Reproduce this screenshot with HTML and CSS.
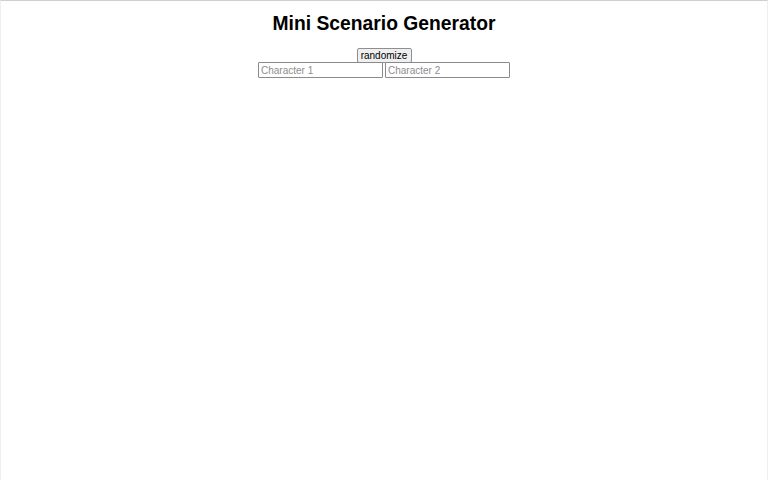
FILE: index.html
```html
<!DOCTYPE html>
<html lang="en">
<head>
<meta charset="utf-8">
<title>Mini Scenario Generator</title>
<link rel="stylesheet" href="styles.css">
</head>
<body>
  <main class="app">
    <h1 class="app-title">Mini Scenario Generator</h1>
    <button class="btn-randomize" type="button">randomize</button>
    <div class="characters">
      <input class="char-input" type="text" placeholder="Character 1">
      <input class="char-input" type="text" placeholder="Character 2">
    </div>
  </main>
</body>
</html>
```
FILE: styles.css
```css
html, body {
  height: 100%;
}

body {
  margin: 0;
  box-sizing: border-box;
  background: #fff;
  border-top: 1px solid #cfcfcf;
  border-left: 1px solid #efefef;
  border-right: 1px solid #efefef;
  font-family: "Liberation Sans", Arial, sans-serif;
  color: #000;
}

.app {
  display: flex;
  flex-direction: column;
  align-items: center;
}

.app-title {
  margin: 11px 0 0;
  font-size: 19.3px;
  line-height: 23px;
  font-weight: bold;
}

.btn-randomize {
  margin-top: 13px;
  width: 55px;
  height: 15px;
  padding: 0;
  font-family: "Liberation Sans", Arial, sans-serif;
  font-size: 10px;
  line-height: 13px;
  color: #000;
  background: #efefef;
  border: 1px solid #8f8f8f;
  border-radius: 2px;
}

.characters {
  display: flex;
  gap: 2px;
  margin-top: -1px;
}

.char-input {
  box-sizing: border-box;
  width: 125px;
  height: 16px;
  padding: 0 2px;
  margin: 0;
  font-family: "Liberation Sans", Arial, sans-serif;
  font-size: 10px;
  border: 1px solid #8a8a8a;
  border-radius: 1px;
  background: #fff;
}

.char-input::placeholder {
  color: #8d8d8d;
}
```
